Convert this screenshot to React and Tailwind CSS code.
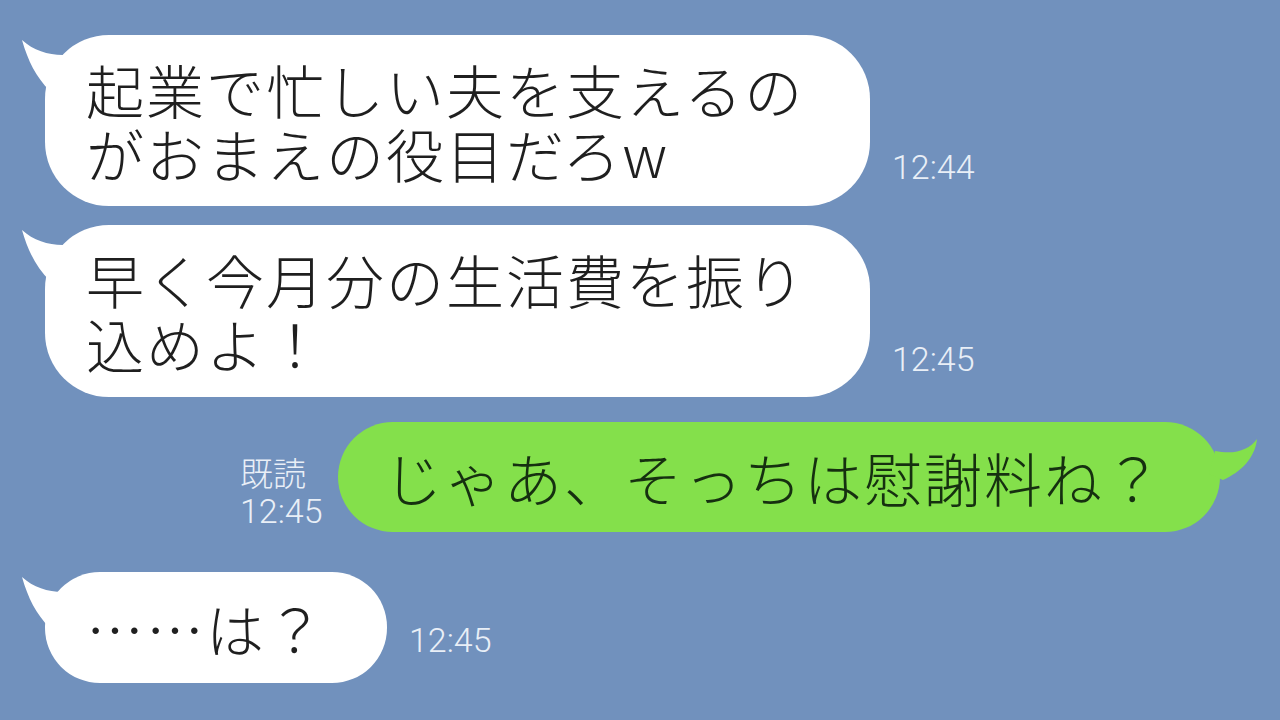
import React from 'react';

const JP = { fontFamily: '"Noto Sans CJK JP", "Noto Sans", sans-serif' };
const TIME = { fontFamily: 'Roboto, "Liberation Sans", "Noto Sans CJK JP", sans-serif' };

// tail sticking out of the top-left corner of an incoming bubble
const LeftTail = () => (
  <svg className="absolute left-[-25px] top-0 w-[80px] h-[64px]" viewBox="0 0 80 64">
    <path d="M2 5 C 8 26, 16 42, 30 56 L 62 40 L 54 19 C 36 22, 16 18, 2 5 Z" fill="#ffffff" />
  </svg>
);

// tail sticking out of the top-right corner of an outgoing bubble
const RightTail = () => (
  <svg className="absolute right-[-45px] top-0 w-[60px] h-[70px]" viewBox="0 0 60 70">
    <path d="M52 17 C 44 28, 30 33, 10 29 L 4 52 L 18 58 C 36 50, 50 36, 52 17 Z" fill="#84e04b" />
  </svg>
);

const Incoming = ({ w, h, radius, time, timeMb, children }) => (
  <div className="flex items-end pl-[45px]">
    <div className={`relative bg-white flex items-center pl-[41px] ${w} ${h} ${radius}`}>
      <LeftTail />
      <div className="relative text-[58px] leading-[64px] tracking-[2px] font-light text-[#1f1f1f] whitespace-nowrap" style={JP}>
        {children}
      </div>
    </div>
    <div className={`ml-[22px] text-[34px] leading-none font-light text-[#e9eff7] ${timeMb}`} style={TIME}>
      {time}
    </div>
  </div>
);

export default function App() {
  return (
    <div className="w-[1280px] h-[720px] bg-[#7191bd] overflow-hidden flex flex-col pt-[35px]">
      <Incoming w="w-[825px]" h="h-[171px]" radius="rounded-[64px]" time="12:44" timeMb="mb-[22px]">
        起業で忙しい夫を支えるの<br />がおまえの役目だろw
      </Incoming>

      <div className="mt-[19px]">
        <Incoming w="w-[825px]" h="h-[172px]" radius="rounded-[64px]" time="12:45" timeMb="mb-[21px]">
          早く今月分の生活費を振り<br />込めよ！
        </Incoming>
      </div>

      {/* outgoing */}
      <div className="mt-[25px] flex justify-end items-end pr-[60px]">
        <div className="mr-[12px] mb-[2px] w-[86px] text-[#e9eff7]">
          <div className="text-[33px] leading-[40px] font-light" style={JP}>既読</div>
          <div className="text-[34px] leading-[38px] font-light" style={TIME}>12:45</div>
        </div>
        <div className="relative w-[882px] h-[110px] rounded-[55px] bg-[#84e04b] flex items-center pl-[46px]">
          <RightTail />
          <div className="relative text-[58px] leading-[64px] tracking-[2px] font-light text-[#163010] whitespace-nowrap" style={JP}>
            じゃあ、そっちは慰謝料ね？
          </div>
        </div>
      </div>

      <div className="mt-[40px]">
        <Incoming w="w-[342px]" h="h-[111px]" radius="rounded-[55px]" time="12:45" timeMb="mb-[26px]">
          ……は？
        </Incoming>
      </div>
    </div>
  );
}
